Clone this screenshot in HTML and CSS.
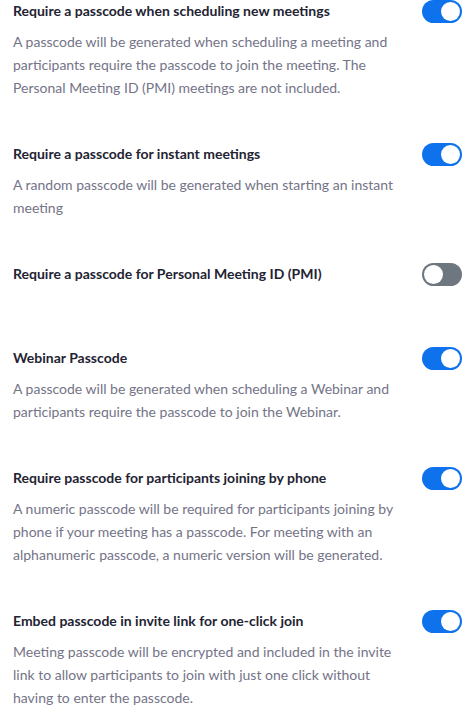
FILE: index.html
```html
<!DOCTYPE html>
<html lang="en">
<head>
<meta charset="utf-8">
<title>Passcode settings</title>
<link rel="stylesheet" href="styles.css">
</head>
<body>
<div class="settings">
  <section class="setting">
    <div class="setting-head">
      <h3 class="setting-title">Require a passcode when scheduling new meetings</h3>
      <span class="toggle toggle-on" role="switch" aria-checked="true"><span class="knob"></span></span>
    </div>
    <p class="setting-desc">A passcode will be generated when scheduling a meeting and participants require the passcode to join the meeting. The Personal Meeting ID (PMI) meetings are not included.</p>
  </section>
  <section class="setting">
    <div class="setting-head">
      <h3 class="setting-title">Require a passcode for instant meetings</h3>
      <span class="toggle toggle-on" role="switch" aria-checked="true"><span class="knob"></span></span>
    </div>
    <p class="setting-desc">A random passcode will be generated when starting an instant meeting</p>
  </section>
  <section class="setting setting-plain">
    <div class="setting-head">
      <h3 class="setting-title">Require a passcode for Personal Meeting ID (PMI)</h3>
      <span class="toggle toggle-off" role="switch" aria-checked="false"><span class="knob"></span></span>
    </div>
  </section>
  <section class="setting">
    <div class="setting-head">
      <h3 class="setting-title">Webinar Passcode</h3>
      <span class="toggle toggle-on" role="switch" aria-checked="true"><span class="knob"></span></span>
    </div>
    <p class="setting-desc">A passcode will be generated when scheduling a Webinar and participants require the passcode to join the Webinar.</p>
  </section>
  <section class="setting">
    <div class="setting-head">
      <h3 class="setting-title">Require passcode for participants joining by phone</h3>
      <span class="toggle toggle-on" role="switch" aria-checked="true"><span class="knob"></span></span>
    </div>
    <p class="setting-desc">A numeric passcode will be required for participants joining by phone if your meeting has a passcode. For meeting with an alphanumeric passcode, a numeric version will be generated.</p>
  </section>
  <section class="setting">
    <div class="setting-head">
      <h3 class="setting-title">Embed passcode in invite link for one-click join</h3>
      <span class="toggle toggle-on" role="switch" aria-checked="true"><span class="knob"></span></span>
    </div>
    <p class="setting-desc">Meeting passcode will be encrypted and included in the invite link to allow participants to join with just one click without having to enter the passcode.</p>
  </section>
</div>
</body>
</html>
```
FILE: styles.css
```css
* {
  box-sizing: border-box;
}

html, body {
  margin: 0;
  padding: 0;
  background: #ffffff;
}

body {
  font-family: Lato, "Open Sans", "Liberation Sans", sans-serif;
  -webkit-font-smoothing: antialiased;
}

.settings {
  display: flex;
  flex-direction: column;
  padding: 0 5px 0 13px;
  margin-top: -1px;
}

.setting {
  padding-bottom: 43px;
}

.setting-plain {
  padding-bottom: 60px;
}

.setting-head {
  display: flex;
  align-items: center;
  justify-content: space-between;
  height: 24px;
}

.setting-title {
  margin: 0;
  font-size: 14px;
  font-weight: 700;
  color: #232333;
  line-height: 20px;
}

.setting-desc {
  margin: 7px 0 0;
  width: 395px;
  font-size: 14px;
  line-height: 23px;
  color: #747487;
}

.toggle {
  position: relative;
  flex: none;
  width: 40px;
  height: 23px;
  border-radius: 12px;
}

.toggle-on {
  background: #0e72ed;
}

.toggle-off {
  background: #6e7680;
}

.knob {
  position: absolute;
  top: 2px;
  width: 19px;
  height: 19px;
  border-radius: 50%;
  background: #ffffff;
}

.toggle-on .knob {
  right: 2px;
}

.toggle-off .knob {
  left: 2px;
}
```
